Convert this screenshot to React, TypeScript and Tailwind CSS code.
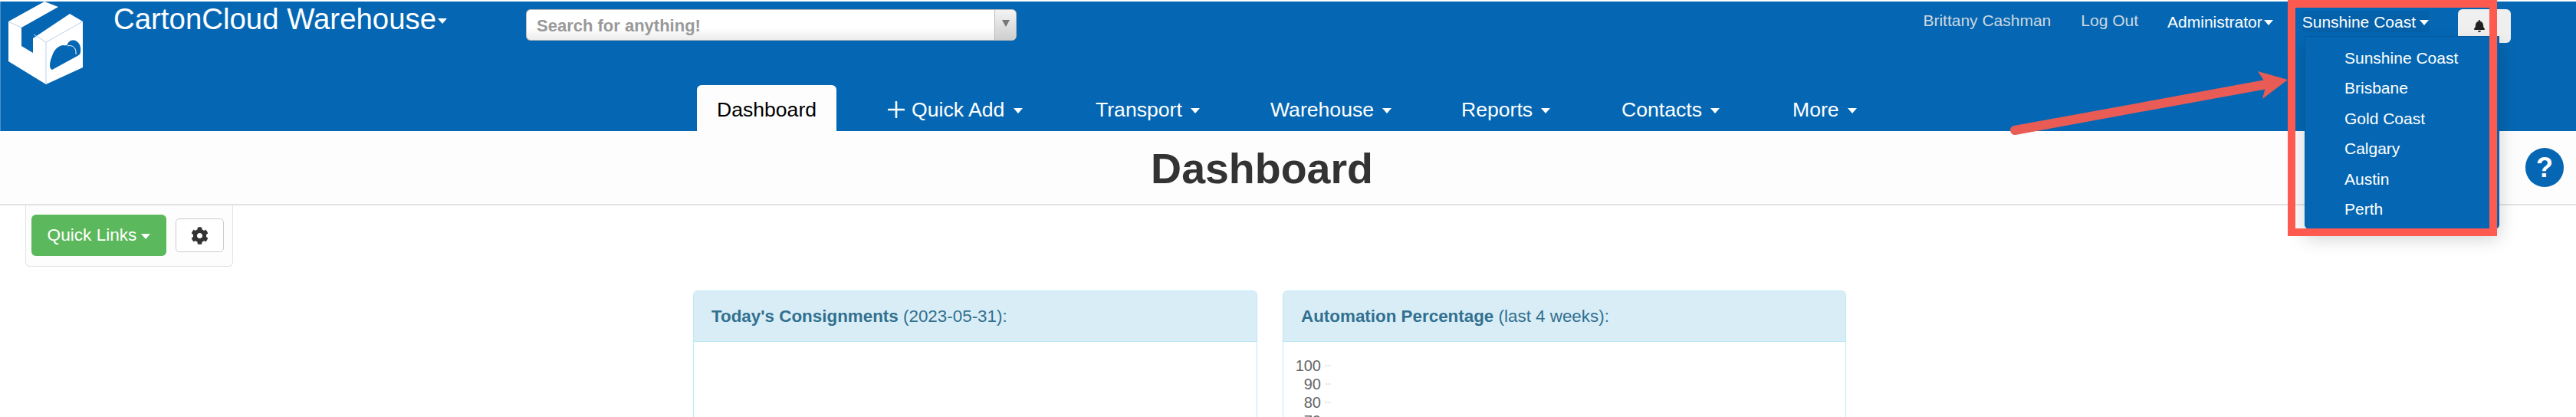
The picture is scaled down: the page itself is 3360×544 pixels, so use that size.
import React from "react";
import { FaBell, FaCog } from "react-icons/fa";

const Caret = ({ className = "" }: { className?: string }) => (
  <span className={"inline-block w-0 h-0 shrink-0 border-x-[6px] border-x-transparent border-t-[7px] border-t-white " + className} />
);

const NavItem = ({ label, className }: { label: string; className: string }) => (
  <div className={"flex items-center pt-[4px] text-white " + className}>
    <span>{label}</span>
    <Caret className="ml-[11px] mt-[2px]" />
  </div>
);

const Logo = () => (
  <svg width="120" height="110" viewBox="1 2 120 110" className="shrink-0">
    <path fill="#fff" d="M11 28 L58 2 L76 9 L28 36 L28 60 L43 69 L43 50 L91 18 L108 28 L108 88 L60 110 L11 80 Z" />
    <path fill="none" stroke="#b9d2ee" strokeWidth="1" d="M11 28 L28 36 M44 45 L60 55 L108 28 M60 55 L60 110" />
    <path fill="#0567b3" d="M68 91 C64 90 64 82 68 73 C70 66 75 60 82 59 C85 59 87 60 88 58 C89 53 96 51 100 54 C104 56 106 62 105 68 C105 70 103 72 101 73 Z" />
    <path fill="none" stroke="#fff" strokeWidth="1" d="M88 60 C94 58 100 62 99 71" />
  </svg>
);

export default function App() {
  return (
    <div className="relative h-[544px] w-[3360px] overflow-hidden bg-white font-['Liberation_Sans',Arial,sans-serif] text-[#333]">
      <div className="h-[2px] bg-white" />
      {/* Top bar */}
      <header className="h-[169px] bg-[#0567b3] border-l border-l-[#4a8fc8] flex flex-col">
        <div className="flex h-[109px] items-start">
          <Logo />
          <div className="ml-[27px] mt-[1px] flex w-[435px] items-center whitespace-nowrap text-[38.4px] leading-[44px] text-white">
            <span>CartonCloud Warehouse</span>
            <Caret className="ml-[2px] mt-[4px]" />
          </div>
          <div className="ml-[103px] mt-[10px] flex h-[41px] w-[640px] rounded-[6px] border border-[#b8b8b8] bg-gradient-to-b from-white from-60% to-[#ececec] overflow-hidden">
            <div className="flex-1 pl-[13px] text-[22px] leading-[42px] font-bold text-[#999]">Search for anything!</div>
            <div className="w-[28px] border-l border-[#b8b8b8] bg-gradient-to-b from-[#f3f3f3] to-[#cfcfcf] flex items-center justify-center pb-[4px]">
              <span className="inline-block w-0 h-0 border-x-[5px] border-x-transparent border-t-[9px] border-t-[#777]" />
            </div>
          </div>
          <div className="ml-auto flex items-start text-[21px]">
            <span className="mt-[11px] leading-[28px] text-[#cfd8e0]">Brittany Cashman</span>
            <span className="ml-[39px] mt-[11px] leading-[28px] text-[#cfd8e0]">Log Out</span>
            <div className="ml-[38px] mt-[13px] flex items-center leading-[28px] text-white">
              <span>Administrator</span>
              <Caret className="ml-[2px] mt-[1px]" />
            </div>
            <div className="ml-[38px] mt-[12px] flex h-[28px] items-center bg-[#0561a9] pt-[2px] text-white">
              <span>Sunshine Coast</span>
              <Caret className="ml-[5px] mt-[1px]" />
            </div>
            <div className="ml-[38px] mr-[85px] mt-[10px] flex h-[44px] w-[69px] rounded-[6px] bg-[#efefef] pl-[20px] pt-[14px] text-[#222]">
              <FaBell size={16} />
            </div>
          </div>
        </div>
        <nav className="flex h-[60px] text-[26.6px] leading-[60px]">
          <div className="ml-[908px] h-[60px] w-[182px] rounded-t-[6px] bg-[#fdfdfd] text-center leading-[64px] text-black">Dashboard</div>
          <div className="ml-[67px] flex w-[271px] items-center pt-[4px] text-white">
            <svg width="22" height="22" viewBox="0 0 22 22" className="mr-[9px]"><path d="M11 1v20M1 11h20" stroke="#fff" strokeWidth="2.6" strokeLinecap="round" /></svg>
            <span>Quick Add</span>
            <Caret className="ml-[12px] mt-[2px]" />
          </div>
          <NavItem label="Transport" className="w-[228px]" />
          <NavItem label="Warehouse" className="w-[249px]" />
          <NavItem label="Reports" className="w-[209px]" />
          <NavItem label="Contacts" className="w-[223px]" />
          <NavItem label="More" className="w-[100px]" />
        </nav>
      </header>

      {/* Page title */}
      <div className="relative h-[97px] border-b-2 border-[#e2e2e2] bg-[#fdfdfd] pr-[68px] text-center">
        <h1 className="pt-[3px] text-[55.500px] font-bold leading-[93px] text-[#333]">Dashboard</h1>
        <div className="absolute left-[3294px] top-[22px] flex h-[51px] w-[50px] items-center justify-center rounded-full bg-[#0567b3] text-[36px] font-bold text-white">?</div>
      </div>

      {/* Quick links */}
      <div className="ml-[33px] flex h-[80px] w-[271px] items-start gap-[12px] rounded-b-[6px] border border-t-0 border-[#e4e4e4] bg-[#fdfdfd] pl-[7px] pt-[12px]">
        <div className="flex h-[54px] w-[176px] items-center justify-center rounded-[6px] bg-[#5cb85c] text-[22.6px] text-white">
          <span>Quick Links</span>
          <Caret className="ml-[6px] mt-[2px]" />
        </div>
        <div className="mt-[5px] flex h-[44px] w-[63px] items-center justify-center rounded-[5px] border border-[#ccc] bg-white text-[#333]">
          <FaCog size={23} />
        </div>
      </div>

      {/* Panels */}
      <div className="ml-[904px] mt-[31px] flex gap-[33px]">
        <section className="h-[300px] w-[736px] rounded-t-[6px] border border-[#bce8f1]">
          <div className="h-[66px] border-b border-[#bce8f1] bg-[#d9edf7] pl-[23px] text-[22.4px] leading-[65px] text-[#31708f]">
            <b>Today's Consignments</b> (2023-05-31):
          </div>
        </section>
        <section className="h-[300px] w-[735px] rounded-t-[6px] border border-[#bce8f1]">
          <div className="h-[66px] border-b border-[#bce8f1] bg-[#d9edf7] pl-[23px] text-[22.4px] leading-[65px] text-[#31708f]">
            <b>Automation Percentage</b> (last 4 weeks):
          </div>
          <div className="mt-[19px] flex w-[62px] flex-col text-[20px] leading-[24px] text-[#666]">
            {["100", "90", "80", "70"].map((t) => (
              <div key={t} className="flex items-center justify-end gap-[5px]">
                <span>{t}</span>
                <span className="h-[2px] w-[8px] bg-[#eee]" />
              </div>
            ))}
          </div>
        </section>
      </div>

      {/* Open dropdown */}
      <div className="absolute left-[3006px] top-[47px] h-[252px] w-[254px] rounded-b-[6px] border border-[#0458a0] bg-[#0567b3] pt-[8px] text-[21px] leading-[39.4px] text-white shadow-[0_12px_24px_rgba(0,0,0,0.18)]">
        {["Sunshine Coast", "Brisbane", "Gold Coast", "Calgary", "Austin", "Perth"].map((c) => (
          <div key={c} className="pl-[51px]">{c}</div>
        ))}
      </div>

      {/* Annotation: red box */}
      <div className="absolute left-[2984px] top-0 h-[308px] w-[273px] border-x-[10px] border-t-[10px] border-b-[10px] border-[#ff5a4f]" />

      {/* Annotation: arrow */}
      <svg className="absolute left-[2600px] top-[80px]" width="400" height="110" viewBox="0 0 400 110">
        <path d="M28 90 L356 30" stroke="#e85c55" strokeWidth="12" strokeLinecap="round" />
        <path d="M345 13 L384 24 L351 49 L356 30 Z" fill="#e85c55" />
      </svg>
    </div>
  );
}
